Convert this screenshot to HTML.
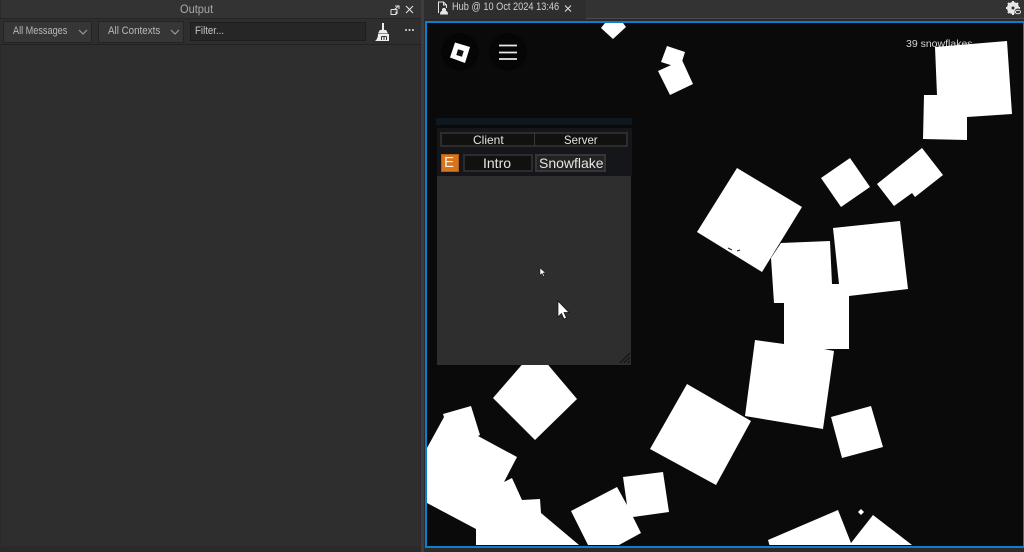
<!DOCTYPE html>
<html><head><meta charset="utf-8"><style>
html,body{margin:0;padding:0;width:1024px;height:552px;overflow:hidden;background:#2a2a2a;font-family:"Liberation Sans",sans-serif}
div{position:absolute;box-sizing:border-box}
.t{white-space:nowrap;transform-origin:0 50%}
.dd{background:#363636;border:1px solid #242424;height:22px;top:21px}
</style></head><body>
<div style="left:0;top:0;width:1024px;height:552px;background:#2a2a2a"></div>
<!-- left panel -->
<div style="left:1px;top:0;width:420px;height:18px;background:#333"></div>
<div style="left:0;top:18px;width:421px;height:1px;background:#262626"></div>
<div class="t" style="left:180px;top:3px;font-size:12px;color:#a8a8a8;transform:scaleX(.92);line-height:13px">Output</div>
<svg style="position:absolute;left:385px;top:0" width="35" height="19" viewBox="0 0 35 19" fill="none" stroke="#e0e0e0"><path d="M6 9.500h6v4h-1M6 9.500v5h5v-3M9 10l5-4.500M10 6h4v3" stroke-width="1"/><path d="M21 6l7 7M28 6l-7 7" stroke-width="1.100"/></svg>
<div style="left:0;top:19px;width:421px;height:25px;background:#2e2e2e"></div>
<div class="dd" style="left:3px;width:89px"></div>
<div class="t" style="left:13px;top:25px;font-size:11px;color:#b8b8b8;transform:scaleX(.83)">All Messages</div>
<div class="dd" style="left:98px;width:86px"></div>
<div class="t" style="left:108px;top:25px;font-size:11px;color:#b8b8b8;transform:scaleX(.89)">All Contexts</div>
<svg style="position:absolute;left:0;top:20px" width="420" height="24" viewBox="0 0 420 24" fill="none" stroke="#9a9a9a" stroke-width="1.200"><path d="M79 10l4 4 4-4M171 10l4 4 4-4"/><path d="M354 9.500h7l-3.500 3.500z" fill="#999" stroke="none"/></svg>
<div style="left:190px;top:22px;width:176px;height:19px;background:#262626;border:1px solid #1d1d1d"></div>
<div class="t" style="left:195px;top:25px;font-size:11px;color:#c4c4c4;transform:scaleX(.88)">Filter...</div>
<svg style="position:absolute;left:374px;top:21px" width="18" height="22" viewBox="0 0 18 22"><path d="M8 2h2v7H8z" fill="#eee"/><path d="M5.500 9.500c1-1 6-1 7 0l1.500 3H4z" fill="#eee"/><path d="M4 13h11v7H1c2-1.500 3-4 3-7z" fill="#eee"/><path d="M7.500 15.500v3.500M10 15.500v3.500M12.500 15.500v3.500M7.500 15.500h5" stroke="#333" stroke-width="1" fill="none"/></svg>
<svg style="position:absolute;left:404px;top:28px" width="12" height="5"><circle cx="2" cy="2" r="1" fill="#ddd"/><circle cx="5.500" cy="2" r="1" fill="#ddd"/><circle cx="9" cy="2" r="1" fill="#ddd"/></svg>
<div style="left:0;top:44px;width:421px;height:1px;background:#222"></div>
<div style="left:1px;top:45px;width:419px;height:501px;background:#2e2e2e"></div>
<div style="left:421px;top:0;width:3px;height:552px;background:#3d3d3d"></div>
<!-- right top -->
<div style="left:424px;top:0;width:162px;height:19px;background:#2e2e2e"></div>
<div style="left:586px;top:0;width:438px;height:18px;background:#333"></div>
<div style="left:586px;top:18px;width:438px;height:1px;background:#4a4a4a"></div>
<svg style="position:absolute;left:436px;top:1px" width="14" height="14" viewBox="0 0 14 14" fill="none" stroke="#e6e6e6" stroke-width="1"><path d="M2.500 12V1h5l3 3v3"/><path d="M7.500 1v3h3"/><circle cx="8" cy="9" r="1.600" fill="#e6e6e6"/><path d="M4.500 13c0-2.500 2-3 3.500-3s3.500 .5 3.500 3z" fill="#e6e6e6"/></svg>
<div class="t" style="left:452px;top:1px;font-size:11px;line-height:13px;color:#d0d0d0;transform:scaleX(.837)">Hub @ 10 Oct 2024 13:46</div>
<svg style="position:absolute;left:564px;top:4px" width="9" height="9" fill="none" stroke="#ddd" stroke-width="1.100"><path d="M1 1.500l6 6M7 1.500l-6 6"/></svg>
<svg style="position:absolute;left:1006px;top:1px" width="16" height="15" viewBox="0 0 16 15"><circle cx="7" cy="7" r="4.500" fill="none" stroke="#e8e8e8" stroke-width="3"/><path d="M7 0v14M0 7h14M2 2l10 10M12 2L2 12" stroke="#e8e8e8" stroke-width="2"/><circle cx="7" cy="7" r="1.500" fill="#2e2e2e"/><circle cx="12" cy="11" r="3.500" fill="#333"/><ellipse cx="12" cy="11" rx="2.600" ry="1.800" fill="none" stroke="#e8e8e8"/></svg>
<!-- viewport -->
<div style="left:425px;top:21px;width:599px;height:527px;background:#0a0a0a;border:2px solid #0a7fd0;border-right-width:1px"></div>
<div style="left:906px;top:38px;font-size:10.500px;color:#d4d4d4;line-height:13px" class="t">39 snowflakes</div>
<svg style="position:absolute;left:0;top:0" width="1024" height="552" viewBox="0 0 1024 552" fill="#fff">
<defs><clipPath id="c"><rect x="427" y="23" width="596" height="522"/></clipPath></defs>
<g clip-path="url(#c)">
<polygon points="605,23 623,23 626,27 613,39 601,28"/>
<polygon points="667,46 685,52 680,68 661,62"/>
<polygon points="658,71 669,66 682,60 693,84 670,95"/>
<polygon points="935,47 1007,41 1012,114 967,117 967,140 923,139 924,95 937,95"/>
<polygon points="850,158 870,187 841,207 821,178"/>
<polygon points="922,148 943,175 915,197 912,193 894,206 877,184"/>
<polygon points="737,168 802,207 762,272 697,232"/>
<polygon points="781,243 830,241 832,284 839,284 833,228 900,221 908,289 849,296 849,349 824,349 834,351 823,429 745,416 755,340 784,344 784,303 774,303 771,258"/>
<polygon points="687,384 751,421 716,485 650,449"/>
<polygon points="871,406 883,447 842,458 831,417"/>
<polygon points="768,540 838,510 851,543 873,515 912,545 770,547"/>
<polygon points="861,509 864,512 861,515 858,512"/>
<polygon points="526,360 544,360 577,399 535,440 493,398"/>
<polygon points="443,414 471,406 480,435 478,436 517,457 504,482 512,478 522,500 540,499 541,513 579,545 476,545 476,529 427,503 427,448 444,417"/>
<polygon points="571,511 617,487 627,505 623,477 663,472 669,512 633,517 641,533 619,545 588,545"/>
<path d="M728 248l4 2M737 251l3-1" stroke="#222" stroke-width="1" fill="none"/>
</g>
<circle cx="460" cy="52" r="19" fill="#050505"/>
<circle cx="508" cy="52" r="19" fill="#050505"/>
<polygon points="455,42.500 470,47 465,63 450,57.500"/>
<rect x="457" y="50" width="6" height="6" transform="rotate(17 460 53)" fill="#111"/>
<path d="M499 45.500h18M499 52.500h18M499 59h18" stroke="#e8e8e8" stroke-width="1.800"/>
</svg>
<!-- widget -->
<div style="left:436px;top:118px;width:196px;height:7px;background:#10181f;border:1px solid #0f1820"></div>
<div style="left:437px;top:128px;width:195px;height:48px;background:#141619"></div>
<div style="left:437px;top:176px;width:194px;height:189px;background:#2e2e2e"></div>
<div style="left:440px;top:132px;width:188px;height:15px;background:#111;border:2px solid #2c2c2c"></div>
<div style="left:534px;top:133px;width:1px;height:13px;background:#3a3a3a"></div>
<div class="t" style="left:473px;top:132.500px;font-size:12px;color:#e2e2e2">Client</div>
<div class="t" style="left:564px;top:132.500px;font-size:12px;color:#e2e2e2;transform:scaleX(.95)">Server</div>
<div style="left:441px;top:154px;width:18px;height:18px;background:#d8741a;border:1px solid #b06018"></div>
<div class="t" style="left:444px;top:154px;font-size:15px;color:#f2f2f2">E</div>
<div style="left:463px;top:154px;width:70px;height:18px;background:#111;border:2px solid #2c2c2c"></div>
<div class="t" style="left:483px;top:155px;font-size:14px;color:#e6e6e6">Intro</div>
<div style="left:535px;top:154px;width:71px;height:18px;background:#222;border:2px solid #363636"></div>
<div class="t" style="left:539px;top:155px;font-size:14px;color:#e6e6e6">Snowflake</div>
<svg style="position:absolute;left:437px;top:176px" width="195" height="190" viewBox="0 0 195 190" fill="none">
<path d="M183 187l10-10M187 187l6-6M191 187l2-2" stroke="#111" stroke-width="1"/>
<path d="M103 92v7l2-1.500 1.500 3 1-.5-1.500-3h2.500z" fill="#fff" stroke="#111" stroke-width=".5"/>
<path d="M121 125v16l3.500-3.500 2.500 5.500 2.500-1-2.500-5.500h5z" fill="#fff" stroke="#111" stroke-width=".7"/>
</svg>
</body></html>
